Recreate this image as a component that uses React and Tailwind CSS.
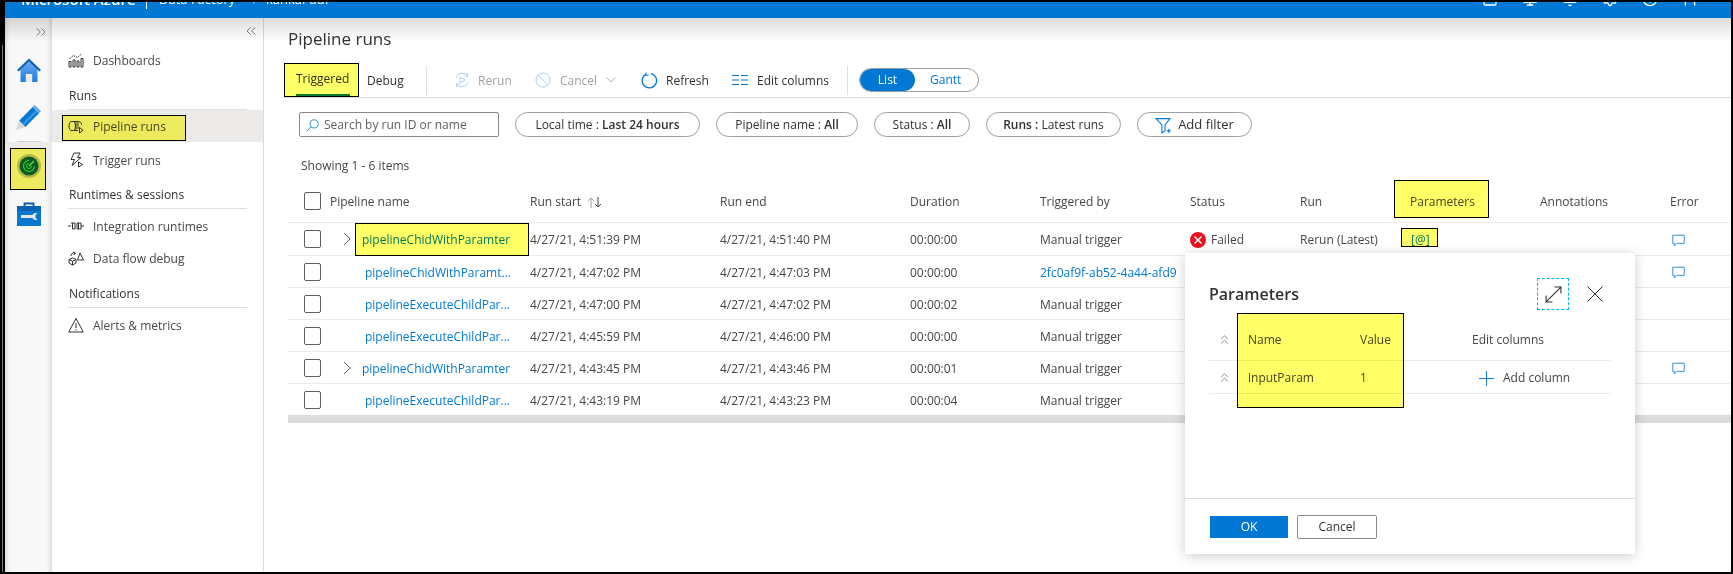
import { Bell, ChevronDown, ChevronRight, ChevronsLeft, ChevronsRight, ChevronsUp, CircleHelp, Settings, SquareTerminal, MonitorUp, User, X } from 'lucide-react';

const cols = 'grid grid-cols-[42px_200px_190px_190px_130px_150px_110px_110px_130px_130px_1fr] items-center [&>span]:pt-[2px]';

const runs = [
  { name: 'pipelineChidWithParamter', expand: true, start: '4/27/21, 4:51:39 PM', end: '4/27/21, 4:51:40 PM', duration: '00:00:00', by: 'Manual trigger', failed: true, params: true, comment: true },
  { name: 'pipelineChidWithParamt...', start: '4/27/21, 4:47:02 PM', end: '4/27/21, 4:47:03 PM', duration: '00:00:00', by: '2fc0af9f-ab52-4a44-afd9', link: true, comment: true },
  { name: 'pipelineExecuteChildPar...', start: '4/27/21, 4:47:00 PM', end: '4/27/21, 4:47:02 PM', duration: '00:00:02', by: 'Manual trigger' },
  { name: 'pipelineExecuteChildPar...', start: '4/27/21, 4:45:59 PM', end: '4/27/21, 4:46:00 PM', duration: '00:00:00', by: 'Manual trigger' },
  { name: 'pipelineChidWithParamter', expand: true, start: '4/27/21, 4:43:45 PM', end: '4/27/21, 4:43:46 PM', duration: '00:00:01', by: 'Manual trigger', comment: true },
  { name: 'pipelineExecuteChildPar...', start: '4/27/21, 4:43:19 PM', end: '4/27/21, 4:43:23 PM', duration: '00:00:04', by: 'Manual trigger' },
];

function Glyph({ className = 'w-4 h-4', children, stroke = 'currentColor' }) {
  return (
    <svg viewBox="0 0 16 16" fill="none" stroke={stroke} strokeWidth="1" className={`shrink-0 ${className}`}>
      {children}
    </svg>
  );
}

function HomeIcon() {
  return (
    <svg viewBox="0 0 24 24" className="w-6 h-6">
      <defs>
        <linearGradient id="homeBody" x1="0" y1="0" x2="0" y2="1">
          <stop offset="0" stopColor="#6aa9f2" />
          <stop offset="1" stopColor="#1f7fdc" />
        </linearGradient>
      </defs>
      <path d="M3.5 11 12 3l8.5 8v13h-17z" fill="url(#homeBody)" />
      <path d="M0 12 12 0.5 24 12l-1.6 1.6L12 3.6 1.6 13.6z" fill="#0f62ac" />
      <rect x="8.8" y="16" width="6.4" height="8" fill="#ececec" />
    </svg>
  );
}

function PencilIcon() {
  return (
    <svg viewBox="0 0 24 24" className="w-[25px] h-[25px]">
      <path d="M3 15 16 2l6 6L9 21z" fill="#0078d4" />
      <path d="M6 18 19 5l1.500 1.500-13 13z" fill="#3b97e6" />
      <path d="M16 2l2-2 6 6-2 2z" fill="#5ea8ee" />
      <path d="M3 15l6 6-9 3z" fill="#d8d8d8" />
    </svg>
  );
}

function RadarIcon() {
  return (
    <svg viewBox="0 0 24 24" className="w-6 h-6" fill="none">
      <circle cx="12" cy="12" r="12" fill="#b8b8b8" />
      <circle cx="12" cy="12" r="9.500" fill="#0b5a52" />
      <path d="M12 6.500a5.500 5.500 0 1 0 5.500 5.500" stroke="#2fd17a" strokeWidth="1.100" />
      <path d="M12 9.500a2.500 2.500 0 1 0 2.500 2.500" stroke="#2fd17a" strokeWidth="1" />
      <path d="M12 12l5-5" stroke="#63e89c" strokeWidth="1.200" />
    </svg>
  );
}

function ToolboxIcon() {
  return (
    <svg viewBox="0 0 24 24" className="w-6 h-6">
      <path d="M7.5 5V1.5h9V5" fill="none" stroke="#0a5fae" strokeWidth="1.8" />
      <rect x="0" y="4" width="24" height="20" fill="#0a78d2" />
      <rect x="0" y="4" width="24" height="5" fill="#0a64b4" />
      <rect x="4" y="13" width="12" height="3" fill="#e8e8e8" />
      <path d="M15 14.5a3.6 3.6 0 0 1 5.5-3l-2 1.6v2.8l2 1.6a3.6 3.6 0 0 1-5.5-3z" fill="#e8e8e8" />
    </svg>
  );
}

const DashboardsIcon = () => (
  <Glyph>
    <path d="M1 15V9.5h2V15zM5 15V8h2v7zM9 15V9h2v6zM13 15V6.5h2V15z" />
    <path d="M1.5 6.5 5.5 3.5 9.5 5.5 14 1.5" strokeDasharray="1.6 1" />
  </Glyph>
);
const PipelineRunsIcon = () => (
  <Glyph>
    <path d="M4 3.5h1.5a2 4.5 0 0 1 0 9H4a3 4.5 0 0 1 0-9z" />
    <path d="M5.5 3.5h5a3 3 0 0 1 3 3.5M10 12.5H5.5M8 4.5v7M10 4v7" />
    <path d="M11.5 9.5v5.5l3.5-2.7z" />
  </Glyph>
);
const TriggerRunsIcon = () => (
  <Glyph>
    <path d="M6 1h6L9.5 5.5H13L4 13.5l2.5-6H3z" />
    <path d="M10.5 10v5l4-2.5z" />
  </Glyph>
);
const RuntimesIcon = () => (
  <Glyph>
    <path d="M0 8h3M13 8h3M3 5h4v6H4.5V5M9 11V5h1.5M9 11h4V5h-2.5v6" />
  </Glyph>
);
const DataFlowIcon = () => (
  <Glyph>
    <path d="M1 9.5 4.5 8 8 9.5V13l-3.5 2L1 13zM1 9.5l3.5 1.7L8 9.5M4.5 11.2V15" />
    <path d="M12 3 15.5 10H9.5zM2.5 6 5 2.5 7 3.5M6 1.5 7.5 3.5 5.5 4.5" />
  </Glyph>
);
const AlertsIcon = () => (
  <Glyph>
    <path d="M8 1.5 15.3 15H.7zM8 6v5M8 12.2v1.3" />
  </Glyph>
);

function NavItem({ icon, label, active, className = '' }) {
  return (
    <div className={`h-8 flex items-center pl-4 gap-[9px] text-[#4a4846] [&>svg]:text-[#323130] ${active ? 'bg-[#edebe9]' : ''} ${className}`}>
      {icon}
      <span className="pt-[2px]">{label}</span>
    </div>
  );
}

function NavHeader({ label, className }) {
  return (
    <div className={`mx-4 pl-px flex items-center border-b border-[#e1dfdd] font-medium text-[#323130] ${className}`}>
      {label}
    </div>
  );
}

function Pill({ children, className = '' }) {
  return (
    <div className={`h-[25px] rounded-full border border-[#a19f9d] flex items-center justify-center pt-px text-[#323130] ${className}`}>
      {children}
    </div>
  );
}

function Checkbox() {
  return <div className="w-[17px] h-[18px] ml-4 rounded-[2px] border border-[#605e5c] bg-white" />;
}

function CommentIcon() {
  return (
    <Glyph className="w-[13px] h-[13px] text-[#0078d4]">
      <path d="M1 1.5h14v10H6l-3 3v-3H1z" />
    </Glyph>
  );
}

// translucent marker boxes sitting over the screenshot
function Marker({ className }) {
  return <div className={`absolute bg-[#ffff66] mix-blend-multiply border-[1.5px] border-black pointer-events-none ${className}`} />;
}

export default function App() {
  return (
    <div className="relative w-[1733px] h-[574px] overflow-hidden bg-white pt-[2px] pl-[5px] pr-[2px] pb-[2px] font-['Open_Sans','Liberation_Sans',sans-serif] text-[12px] text-[#323130]">
      <header className="h-4 bg-[#0078d4] overflow-hidden text-white">
        <div className="flex h-5 -mt-[13px] pl-4">
          <span className="w-[125px] font-semibold text-[15px] leading-5">Microsoft Azure</span>
          <span className="w-px h-full bg-white" />
          <span className="ml-3 w-[90px] text-[13px] leading-5">Data Factory</span>
          <ChevronRight size={12} className="mt-[5px]" />
          <span className="ml-[5px] text-[13px] leading-5">kankai-adf</span>
          <div className="ml-auto flex pr-[21px] items-end pb-[2px]">
            <span className="w-10 flex justify-center"><SquareTerminal size={16} /></span>
            <span className="w-10 flex justify-center"><MonitorUp size={16} /></span>
            <span className="w-10 flex justify-center"><Bell size={16} /></span>
            <span className="w-10 flex justify-center"><Settings size={16} /></span>
            <span className="w-10 flex justify-center"><CircleHelp size={16} /></span>
            <span className="w-10 flex justify-center"><User size={16} /></span>
          </div>
        </div>
      </header>

      <div className="flex h-[554px]">
        <aside className="w-[47px] shrink-0 bg-[#f8f8f8] shadow-[inset_-5px_0_4px_-3px_rgba(0,0,0,0.12),inset_5px_0_4px_-3px_rgba(0,0,0,0.12)]">
          <div className="h-7 flex items-center justify-end pr-[3px] text-[#605e5c]"><ChevronsRight size={16} strokeWidth={1.2} /></div>
          <div className="h-12 flex items-center justify-center"><HomeIcon /></div>
          <div className="h-[47px] flex items-center justify-center"><PencilIcon /></div>
          <div className="h-px w-6 mx-auto bg-[#cfcfcf]" />
          <div className="h-12 flex items-center justify-center bg-[#edebe9]"><RadarIcon /></div>
          <div className="h-12 flex items-center justify-center"><ToolboxIcon /></div>
        </aside>

        <nav className="w-[212px] shrink-0 border-r border-[#dcdcdc]">
          <div className="h-[26px] flex items-center justify-end pr-[4px] text-[#605e5c]"><ChevronsLeft size={16} strokeWidth={1.2} /></div>
          <NavItem icon={<DashboardsIcon />} label="Dashboards" />
          <NavHeader label="Runs" className="h-[34px] pt-[6px]" />
          <NavItem icon={<PipelineRunsIcon />} label="Pipeline runs" active />
          <NavItem icon={<TriggerRunsIcon />} label="Trigger runs" className="mt-[2px]" />
          <NavHeader label="Runtimes & sessions" className="h-[33px] pt-[5px]" />
          <NavItem icon={<RuntimesIcon />} label="Integration runtimes" className="mt-px" />
          <NavItem icon={<DataFlowIcon />} label="Data flow debug" />
          <NavHeader label="Notifications" className="h-[34px] pt-[6px]" />
          <NavItem icon={<AlertsIcon />} label="Alerts & metrics" className="mt-px" />
        </nav>

        <main className="flex-1 min-w-0">
          <div className="h-[45px] pt-[9px] pl-6 text-[17px] leading-6 text-[#323130]">Pipeline runs</div>

          <div className="ml-5 h-[35px] flex items-center border-b border-[#dcdcdc]">
            <div className="relative w-[75px] h-full pl-3 flex items-center pb-[3px]">
              Triggered
              <span className="absolute left-3 bottom-0 w-[54px] h-[3px] bg-[#0b7a75]" />
            </div>
            <span className="ml-2 w-[59px] pt-[2px]">Debug</span>
            <span className="w-px h-[29px] bg-[#e1dfdd]" />
            <div className="ml-[27px] flex items-center text-[#a19f9d]">
              <Glyph className="w-4 h-4 text-[#a9cdf0]">
                <path d="M2 5.5A6.5 6.5 0 0 1 13.5 4M14 10.5A6.5 6.5 0 0 1 2.5 12M13.5 1v3h-3M2.500 15v-3h3" />
                <path d="M6 5v6l5-3z" />
              </Glyph>
              <span className="ml-2 w-[57px] pt-[2px]">Rerun</span>
              <Glyph className="w-4 h-4 text-[#a9cdf0]">
                <circle cx="8" cy="8" r="7" />
                <path d="M3 3l10 10" />
              </Glyph>
              <span className="ml-[9px] w-[43px] pt-[2px]">Cancel</span>
              <ChevronDown size={16} className="text-[#8a8886]" strokeWidth={1} />
            </div>
            <Glyph className="ml-[22px] w-[17px] h-[17px] text-[#0078d4]">
              <path d="M9.500 1.500A6.800 6.800 0 1 1 4.500 2.200" strokeWidth="1.2" />
              <path d="M4.700 0.500v2.500h2.500" />
            </Glyph>
            <span className="ml-2 w-[66px] pt-[2px]">Refresh</span>
            <Glyph className="w-4 h-4 text-[#0078d4]">
              <path d="M0 3.500h7M0 8h7M0 12.500h7M9 3.500h7M9 8h7M9 12.500h7" />
            </Glyph>
            <span className="ml-[9px] w-[90px] pt-[2px]">Edit columns</span>
            <span className="w-px h-[29px] bg-[#e1dfdd]" />
            <div className="ml-[11px] w-[120px] h-6 rounded-full border border-[#a19f9d] flex items-center overflow-hidden">
              <span className="w-[55px] h-full rounded-full bg-[#0078d4] text-white flex items-center justify-center">List</span>
              <span className="ml-[15px] text-[#0078d4]">Gantt</span>
            </div>
          </div>

          <div className="mt-[14px] ml-[35px] flex items-center gap-4 h-[25px]">
            <div className="w-[200px] h-[25px] border border-[#8a8886] rounded-[2px] flex items-center pl-[6px] pt-px gap-[5px] text-[#605e5c]">
              <Glyph className="w-[13px] h-[13px] text-[#0078d4]">
                <circle cx="10" cy="6" r="5" />
                <path d="M6.500 9.500 1 15" />
              </Glyph>
              Search by run ID or name
            </div>
            <Pill className="w-[185px]"><span>Local time : <b className="font-semibold">Last 24 hours</b></span></Pill>
            <Pill className="w-[142px]"><span>Pipeline name : <b className="font-semibold">All</b></span></Pill>
            <Pill className="w-[96px]"><span>Status : <b className="font-semibold">All</b></span></Pill>
            <Pill className="w-[135px]"><span><b className="font-semibold">Runs :</b> Latest runs</span></Pill>
            <Pill className="w-[115px] gap-[6px]">
              <Glyph className="w-[17px] h-[17px] text-[#0078d4]">
                <path d="M1 1.500h13L9.500 7.500V13L6.500 15V7.500z" />
                <path d="M11 13h4M13 11v4" />
              </Glyph>
              <span className="text-[13px]">Add filter</span>
            </Pill>
          </div>

          <div className="mt-[19px] ml-[37px] h-5 leading-5 text-[#484644]">Showing 1 - 6 items</div>

          <div className="mt-1 ml-6">
            <div className={`${cols} h-[43px] border-b border-[#edebe9] text-[#484644]`}>
              <Checkbox />
              <span>Pipeline name</span>
              <span className="flex items-center gap-[6px]">
                Run start
                <svg viewBox="0 0 15 11" fill="none" strokeWidth="1" className="w-[15px] h-[11px]">
                  <path d="M4 11V1M1 4l3-3 3 3" stroke="#a19f9d" />
                  <path d="M11 0v10M8 7l3 3 3-3" stroke="#484644" />
                </svg>
              </span>
              <span>Run end</span>
              <span>Duration</span>
              <span>Triggered by</span>
              <span>Status</span>
              <span>Run</span>
              <span>Parameters</span>
              <span>Annotations</span>
              <span>Error</span>
            </div>
            {runs.map((run, i) => (
              <div
                key={i}
                className={`${cols} text-[#484644] ${i === 0 ? 'h-[33px]' : i === 5 ? 'h-[31px]' : 'h-8'} ${i === 5 ? '' : 'border-b border-[#edebe9]'}`}
              >
                <Checkbox />
                <div className="flex items-center min-w-0">
                  {run.expand ? (
                    <svg viewBox="0 0 8 14" fill="none" stroke="#605e5c" className="shrink-0 w-2 h-[14px] ml-[13px] mr-[11px]">
                      <path d="M1 1l6 6-6 6" />
                    </svg>
                  ) : null}
                  <span className={`text-[#0078d4] whitespace-nowrap pt-[2px] ${run.expand ? '' : 'ml-[35px]'}`}>{run.name}</span>
                </div>
                <span>{run.start}</span>
                <span>{run.end}</span>
                <span>{run.duration}</span>
                <span className={`whitespace-nowrap ${run.link ? 'text-[#0078d4]' : ''}`}>{run.by}</span>
                {run.failed ? (
                  <span className="flex items-center gap-[5px]">
                    <span className="w-4 h-4 rounded-full bg-[#e81123] flex items-center justify-center text-white">
                      <X size={12} strokeWidth={3} />
                    </span>
                    Failed
                  </span>
                ) : <span />}
                <span>{run.failed ? 'Rerun (Latest)' : ''}</span>
                <span className="text-[#0078d4] pl-px">{run.params ? '[@]' : ''}</span>
                <span />
                <span className="pl-[2px]">{run.comment ? <CommentIcon /> : null}</span>
              </div>
            ))}
            <div className="h-2 bg-[#dcdcdc]" />
          </div>
        </main>
      </div>

      <div className="absolute left-[5px] right-[2px] top-[18px] h-6 bg-linear-to-b from-[#dcdcdc] to-transparent mix-blend-multiply pointer-events-none" />

      <Marker className="left-[10px] top-[148px] w-[36px] h-[42px]" />
      <Marker className="left-[62px] top-[115px] w-[124px] h-[26px]" />
      <Marker className="left-[284px] top-[63px] w-[75px] h-[34px]" />
      <Marker className="left-[355px] top-[223px] w-[174px] h-[33px]" />
      <Marker className="left-[1394px] top-[180px] w-[95px] h-[38px]" />
      <Marker className="left-[1401px] top-[228px] w-[37px] h-[19px]" />

      <div className="absolute left-[1185px] top-[253px] w-[450px] h-[301px] bg-white shadow-[0_2px_12px_rgba(0,0,0,0.2)] flex flex-col text-[#484644]">
        <div className="mt-[25px] h-8 pl-6 pr-8 flex items-center">
          <span className="text-[16px] font-semibold text-[#323130]">Parameters</span>
          <div className="ml-auto w-8 h-8 border border-dashed border-[#00b7ee] flex items-center justify-center">
            <Glyph className="w-[17px] h-[17px] text-[#323130]">
              <path d="M1 15 15 1M9 1h6v6M1 9v6h6" />
            </Glyph>
          </div>
          <Glyph className="ml-[18px] w-4 h-4 text-[#323130]">
            <path d="M0.500 0.500l15 15M15.500 0.500l-15 15" />
          </Glyph>
        </div>
        <div className="mt-2 mx-6 grid grid-cols-[39px_112px_112px_1fr] items-center h-[43px] border-b border-[#edebe9] [&>span]:pt-[2px]">
          <ChevronsUp size={15} strokeWidth={1} className="ml-[8px]" />
          <span>Name</span>
          <span>Value</span>
          <span>Edit columns</span>
        </div>
        <div className="mx-6 grid grid-cols-[39px_112px_112px_1fr] items-center h-[33px] border-b border-[#edebe9] [&>span]:pt-[2px]">
          <ChevronsUp size={15} strokeWidth={1} className="ml-[8px]" />
          <span>inputParam</span>
          <span>1</span>
          <span className="flex items-center ml-[7px] gap-[9px]">
            <Glyph className="w-[15px] h-[15px] text-[#0078d4]">
              <path d="M8 0v16M0 8h16" />
            </Glyph>
            Add column
          </span>
        </div>
        <div className="mt-auto h-14 border-t border-[#dcdcdc] pl-[25px] flex items-center">
          <button className="w-[78px] h-[22px] bg-[#0078d4] text-white">OK</button>
          <button className="ml-[9px] w-20 h-6 border border-[#8a8886] rounded-[2px] text-[#323130]">Cancel</button>
        </div>
      </div>

      <Marker className="left-[1237px] top-[313px] w-[167px] h-[95px]" />

      <div className="absolute inset-0 border-t-2 border-r-2 border-b-2 border-l-[5px] border-black pointer-events-none" />
      <div className="absolute left-[2px] top-[45px] bottom-[2px] w-px bg-[#777] pointer-events-none" />
    </div>
  );
}
